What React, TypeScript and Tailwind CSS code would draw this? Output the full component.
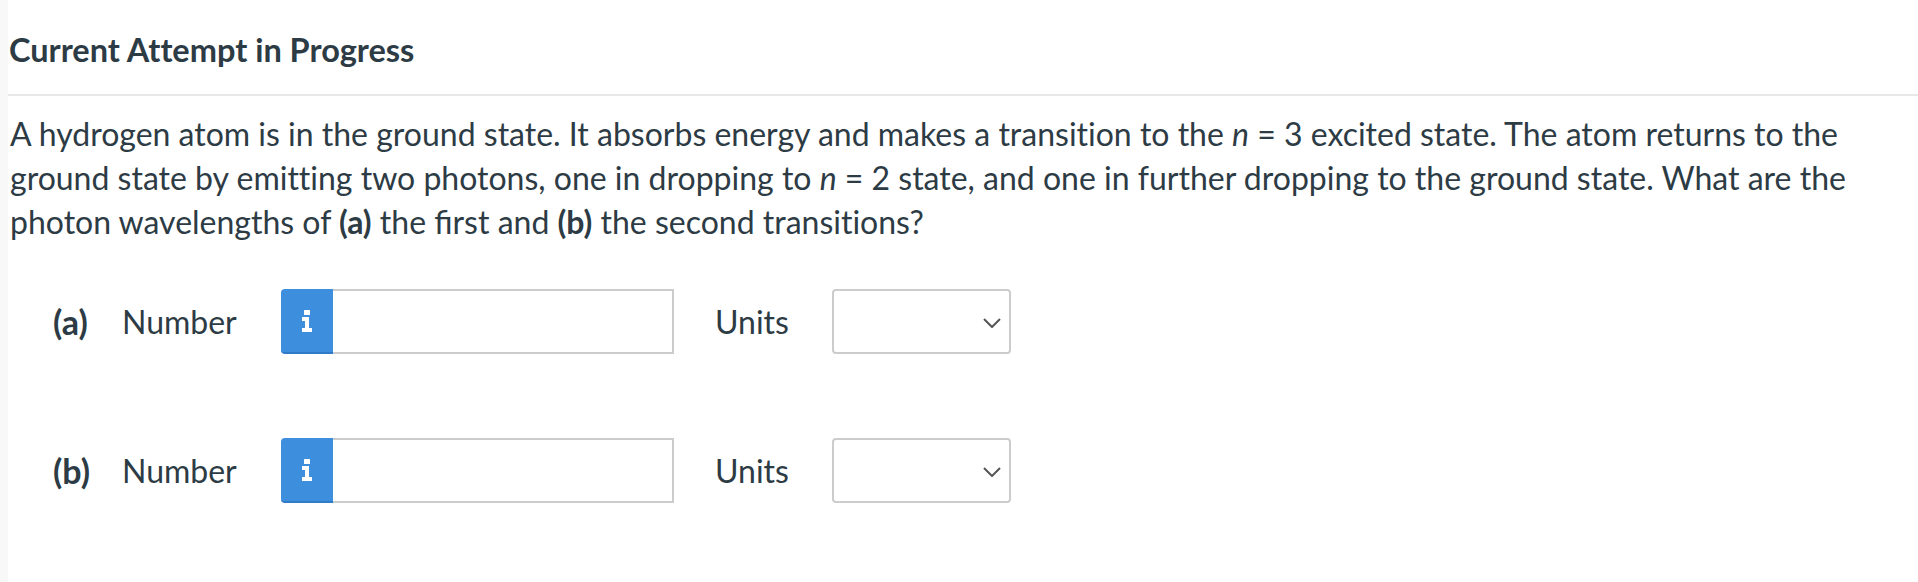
import React from "react";

const font = { fontFamily: "Lato, 'Open Sans', sans-serif" };

function InfoBadge() {
  return (
    <div className="flex h-[65px] w-[52px] shrink-0 items-center justify-center rounded-l-[4px] border-b-2 border-[#2f7bc8] bg-[#3d8fde]">
      <svg width="12" height="22" viewBox="0 0 12 22" fill="#ffffff">
        <rect x="3" y="0" width="6" height="5" rx="0.5" />
        <path d="M1 7h7v11h3v4H1v-4h3v-7H1z" />
      </svg>
    </div>
  );
}

function AnswerRow({ part }: { part: string }) {
  return (
    <div className="flex items-center pl-[45px]">
      <span className="w-[38px] text-[34px] font-bold text-[#2d3b45]">({part})</span>
      <span className="ml-[31px] w-[114px] text-[32px] text-[#2d3b45]">Number</span>
      <div className="ml-[45px] flex">
        <InfoBadge />
        <input
          type="text"
          className="h-[65px] w-[341px] border-2 border-l-0 border-[#cccccc] bg-white outline-none"
        />
      </div>
      <span className="ml-[41px] w-[73px] text-[32px] text-[#2d3b45]">Units</span>
      <div className="relative ml-[44px] h-[65px] w-[179px] rounded-[4px] border-2 border-[#cccccc] bg-white">
        <svg
          className="absolute right-[8px] top-[27px]"
          width="18"
          height="10"
          viewBox="0 0 18 10"
          fill="none"
          stroke="#555555"
          strokeWidth="2"
        >
          <path d="M1 1l8 8 8-8" />
        </svg>
      </div>
    </div>
  );
}

export default function App() {
  return (
    <div className="flex min-h-[582px] w-full bg-white [font-variant-ligatures:none]" style={font}>
      <div className="w-[8px] shrink-0 bg-[#f8f8f8]" />
      <div className="flex-1">
        <div className="flex h-[96px] items-start border-b-2 border-[#e8e8e8] pl-[1px] pt-[30px]">
          <h1 className="text-[32.5px] font-bold leading-[40px] text-[#2d3b45]">
            Current Attempt in Progress
          </h1>
        </div>
        <p className="mt-[16px] w-[1860px] pl-[2px] text-[32px] leading-[44px] text-[#2d3b45]">
          A hydrogen atom is in the ground state. It absorbs energy and makes a transition to the{" "}
          <i>n</i> = 3 excited state. The atom returns to the ground state by emitting two photons,
          one in dropping to <i>n</i> = 2 state, and one in further dropping to the ground state.
          What are the photon wavelengths of <b>(a)</b> the &#xFB01;rst and <b>(b)</b> the second
          transitions?
        </p>
        <div className="mt-[45px] flex flex-col gap-[84px]">
          <AnswerRow part="a" />
          <AnswerRow part="b" />
        </div>
      </div>
    </div>
  );
}
